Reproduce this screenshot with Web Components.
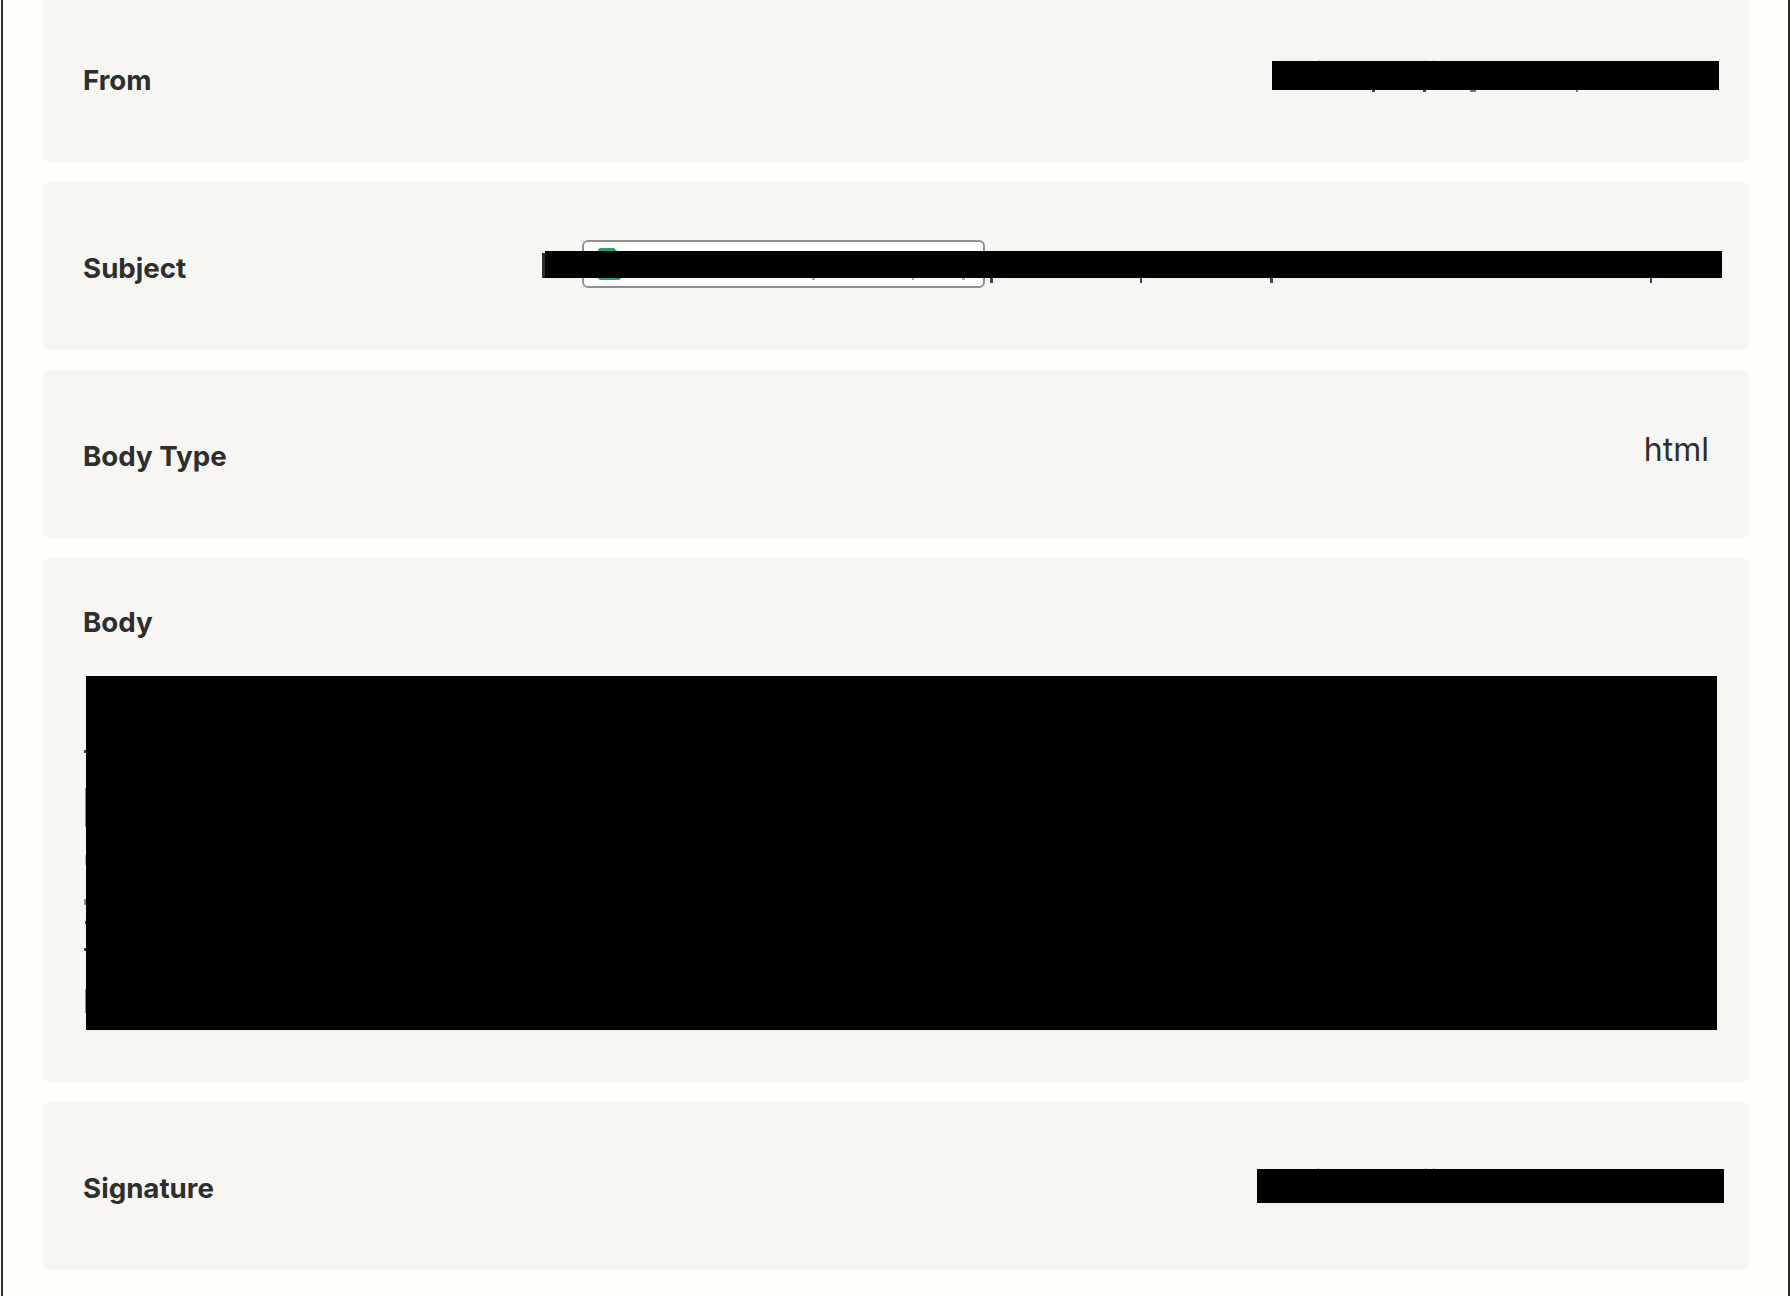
<!DOCTYPE html>
<html lang="en">
<head>
<meta charset="utf-8">
<title>Email step details</title>
<style>
  html, body { margin: 0; height: 100%; background: #fffefa; overflow: hidden; }
</style>
</head>
<body>
<details-panel>
  <field-row label="From" style="--value-right: 30px; --value-shift: -3px">
    <redact-bar w="447" h="29" ticks="100,29,3,2;151,29,3,2;198,29,6,2,#777;304,29,2,2,#777;46,-1,2,1,#ccc;153,-1,2,1,#ccc;161,-1,2,1,#ccc"></redact-bar>
  </field-row>
  <field-row label="Subject" style="--value-right: 27px; --value-shift: -2px">
    <subject-value></subject-value>
  </field-row>
  <field-row label="Body Type" style="--value-right: 40px; --value-shift: -4px">
    <span>html</span>
  </field-row>
  <field-row label="Body" stacked>
    <redact-bar w="1631" h="354" ticks="-2,74,2,3;-1,112,1,39,#888;-1,179,1,10,#aaa;-2,223,2,6,#888;-1,245,1,3;-2,272,2,3;-1,313,1,24,#888"></redact-bar>
  </field-row>
  <field-row label="Signature" style="--value-right: 25px">
    <redact-bar w="467" h="34" ticks="60,-1,2,1,#ccc;168,-1,2,1,#ccc;176,-1,2,1,#ccc"></redact-bar>
  </field-row>
</details-panel>

<script>
class DetailsPanel extends HTMLElement {
  connectedCallback() {
    this.attachShadow({ mode: 'open' });
    this.shadowRoot.innerHTML = `
      <style>
        :host {
          display: block;
          box-sizing: border-box;
          height: 1296px;
          margin-left: 1px;
          border-left: 2px solid #2d2e2e;
          border-right: 2px solid #2d2e2e;
          overflow: hidden;
          font-family: Inter, "Liberation Sans", sans-serif;
          color: #2d2e2e;
        }

        .rows {
          display: flex;
          flex-direction: column;
          gap: 20px;
          /* the list is scrolled a little, the first card is cut off */
          margin: -6px 39px 0 40px;
        }
      </style>
      <div class="rows"><slot></slot></div>
    `;
  }
}

class FieldRow extends HTMLElement {
  connectedCallback() {
    this.attachShadow({ mode: 'open' });
    const stacked = this.hasAttribute('stacked');
    this.shadowRoot.innerHTML = `
      <style>
        :host {
          display: block;
          background: #f7f6f3;
          border-radius: 6px;
        }

        .row {
          display: flex;
          align-items: center;
          justify-content: space-between;
          height: 168px;
          padding: 0 var(--value-right, 30px) 0 40px;
          box-sizing: border-box;
        }

        .stack {
          padding: 48px 32px 52px 40px;
        }

        .label {
          font-size: 27.7px;
          line-height: 32px;
          font-weight: 700;
          position: relative;
          top: 2px;
        }

        .stack .label {
          top: 0;
          margin-bottom: 38px;
        }

        .stack .value {
          margin-left: 3px;
        }

        .value {
          display: block;
          position: relative;
          top: var(--value-shift, 0);
          font-size: 32px;
          line-height: 38px;
        }
      </style>
      <div class="${stacked ? 'stack' : 'row'}">
        <div class="label">${this.getAttribute('label')}</div>
        <div class="value"><slot></slot></div>
      </div>
    `;
  }
}

class RedactBar extends HTMLElement {
  connectedCallback() {
    this.attachShadow({ mode: 'open' });
    // ticks are the bits of text that stick out round the black bar
    const ticks = (this.getAttribute('ticks') || '').split(';').filter(Boolean).map(t => {
      const [x, y, w, h, c] = t.split(',');
      return `<i style="left:${x}px;top:${y}px;width:${w}px;height:${h}px;background:${c || '#444'}"></i>`;
    }).join('');
    this.shadowRoot.innerHTML = `
      <style>
        :host {
          display: block;
          position: relative;
          background: #000;
          width: ${this.getAttribute('w')}px;
          height: ${this.getAttribute('h')}px;
        }

        i {
          position: absolute;
          display: block;
        }
      </style>
      ${ticks}
    `;
  }
}

class SubjectValue extends HTMLElement {
  connectedCallback() {
    this.attachShadow({ mode: 'open' });
    this.shadowRoot.innerHTML = `
      <style>
        :host {
          display: block;
          position: relative;
          width: 1177px;
          height: 27px;
        }

        .pill {
          position: absolute;
          left: 37px;
          top: -11px;
          width: 403px;
          height: 48px;
          box-sizing: border-box;
          background: #fff;
          border: 2px solid #92918b;
          border-radius: 6px;
        }

        .app-icon {
          position: absolute;
          left: 14px;
          top: 6px;
          width: 23px;
          height: 32px;
        }

        redact-bar {
          position: absolute;
          left: 0;
          top: 0;
        }
      </style>
      <div class="pill">
        <svg class="app-icon" viewBox="0 0 23 32"><path fill="#2f9e6b" d="M3 0H16L23 7V29a3 3 0 0 1-3 3H3a3 3 0 0 1-3-3V3a3 3 0 0 1 3-3Z"/></svg>
      </div>
      <redact-bar w="1177" h="27" ticks="-3,2,3,25,#2d2e2e;267,27,3,2,#aaa;367,27,2,2,#aaa;417,27,3,2,#aaa;445,27,3,5;595,27,2,5;725,27,3,5;1105,27,2,5"></redact-bar>
    `;
  }
}

customElements.define('details-panel', DetailsPanel);
customElements.define('field-row', FieldRow);
customElements.define('redact-bar', RedactBar);
customElements.define('subject-value', SubjectValue);
</script>
</body>
</html>
